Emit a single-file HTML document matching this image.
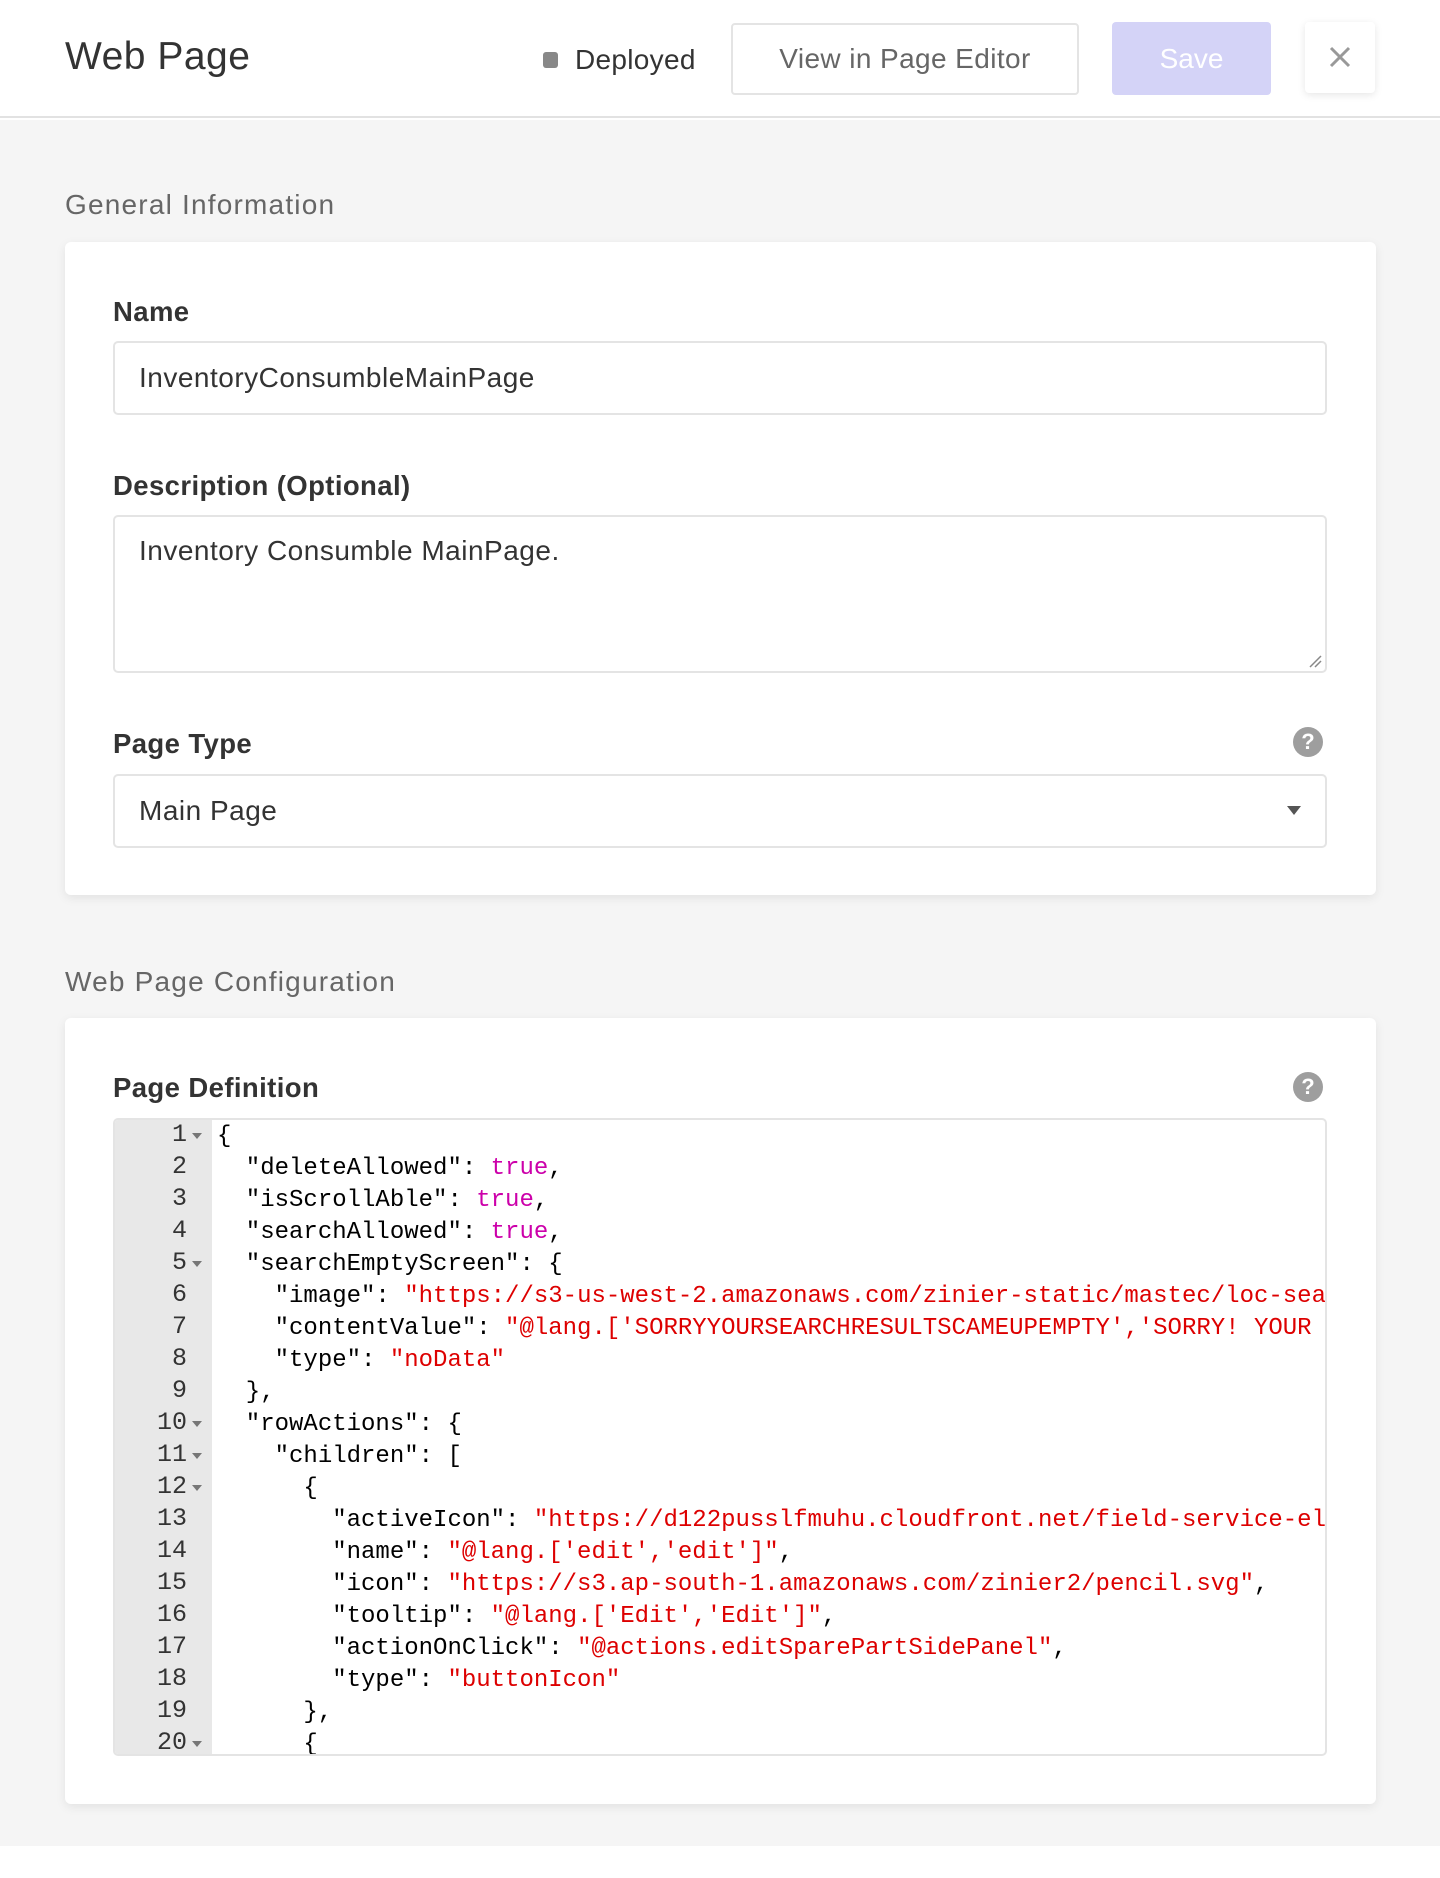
<!DOCTYPE html>
<html><head><meta charset="utf-8"><style>
*{box-sizing:border-box;margin:0;padding:0}
body{width:1440px;height:1878px;background:#fff;font-family:"Liberation Sans",sans-serif;color:#333;position:relative;overflow:hidden}
.abs{position:absolute}
.hdr{left:0;top:0;width:1440px;height:118px;background:#fff;border-bottom:2px solid #e2e2e2}
.grey{left:0;top:120px;width:1440px;height:1726px;background:#f5f5f5}
.card{background:#fff;border-radius:6px;box-shadow:0 3px 10px rgba(0,0,0,.08)}
.sec{font-size:28px;letter-spacing:1.2px;color:#666;left:65px}
.lbl{font-size:27.5px;letter-spacing:.4px;font-weight:bold;color:#333;left:113px}
.inp{left:113px;width:1214px;border:2px solid #e4e4e4;border-radius:5px;background:#fff;font-size:28px;letter-spacing:.5px;color:#333;padding-left:24px}
.help{width:30px;height:30px;border-radius:50%;background:#9e9e9e;color:#fff;font-weight:bold;font-size:22px;text-align:center;line-height:30px}
.ed{left:113px;top:1118px;width:1214px;height:638px;border:2px solid #e4e4e4;border-radius:5px;overflow:hidden;background:#fff}
.gut{left:0;top:0;width:97px;height:100%;background:#e8e8e8}
.ln{position:absolute;left:0;width:72px;text-align:right;font-family:"Liberation Mono",monospace;font-size:25px;color:#333}
.fa{position:absolute;left:77px;width:0;height:0;border-left:5px solid transparent;border-right:5px solid transparent;border-top:6px solid #777}
.code{position:absolute;left:102px;top:1px;font-family:"Liberation Mono",monospace;font-size:24px;line-height:32px;white-space:pre;color:#000}
.s{color:#d00}.b{color:#c0a}
</style></head><body>
<div class="abs hdr"></div>
<div class="abs" style="left:65px;top:35px;font-size:39px;letter-spacing:.5px;color:#333">Web Page</div>
<div class="abs" style="left:543px;top:52px;width:15px;height:16px;border-radius:3px;background:#888"></div>
<div class="abs" style="left:575px;top:44px;font-size:28px;letter-spacing:.3px;color:#333">Deployed</div>
<div class="abs" style="left:731px;top:23px;width:348px;height:72px;border:2px solid #e4e4e4;border-radius:4px;font-size:28px;letter-spacing:.4px;color:#666;text-align:center;line-height:68px">View in Page Editor</div>
<div class="abs" style="left:1112px;top:22px;width:159px;height:73px;background:#d4d3f7;border-radius:4px;font-size:28px;color:#fff;text-align:center;line-height:73px">Save</div>
<div class="abs" style="left:1305px;top:22px;width:70px;height:71px;background:#fff;border-radius:4px;box-shadow:0 2px 8px rgba(0,0,0,.1)">
<svg width="70" height="71"><path d="M26 26 L44 44 M44 26 L26 44" stroke="#999" stroke-width="3"/></svg></div>
<div class="abs grey"></div>
<div class="abs sec" style="top:189px">General Information</div>
<div class="abs card" style="left:65px;top:242px;width:1311px;height:653px"></div>
<div class="abs lbl" style="top:296px">Name</div>
<div class="abs inp" style="top:341px;height:74px;line-height:70px">InventoryConsumbleMainPage</div>
<div class="abs lbl" style="top:470px">Description (Optional)</div>
<div class="abs inp" style="top:515px;height:158px;padding-top:18px">Inventory Consumble MainPage.
<svg class="abs" style="right:3px;bottom:3px" width="14" height="14"><path d="M2 13 L13 2 M7 13 L13 7" stroke="#888" stroke-width="1.5"/></svg></div>
<div class="abs lbl" style="top:728px">Page Type</div>
<div class="abs help" style="left:1293px;top:727px">?</div>
<div class="abs inp" style="top:774px;height:74px;line-height:70px">Main Page</div>
<div class="abs" style="left:1287px;top:806px;border-left:7px solid transparent;border-right:7px solid transparent;border-top:9px solid #555"></div>
<div class="abs sec" style="top:966px">Web Page Configuration</div>
<div class="abs card" style="left:65px;top:1018px;width:1311px;height:786px"></div>
<div class="abs lbl" style="top:1072px">Page Definition</div>
<div class="abs help" style="left:1293px;top:1072px">?</div>
<div class="abs ed">
<div class="abs gut"></div>
<div style="position:absolute;left:0;top:0">
<div class="ln" style="top:0">1</div><div class="fa" style="top:13px"></div>
<div class="ln" style="top:32px">2</div>
<div class="ln" style="top:64px">3</div>
<div class="ln" style="top:96px">4</div>
<div class="ln" style="top:128px">5</div><div class="fa" style="top:141px"></div>
<div class="ln" style="top:160px">6</div>
<div class="ln" style="top:192px">7</div>
<div class="ln" style="top:224px">8</div>
<div class="ln" style="top:256px">9</div>
<div class="ln" style="top:288px">10</div><div class="fa" style="top:301px"></div>
<div class="ln" style="top:320px">11</div><div class="fa" style="top:333px"></div>
<div class="ln" style="top:352px">12</div><div class="fa" style="top:365px"></div>
<div class="ln" style="top:384px">13</div>
<div class="ln" style="top:416px">14</div>
<div class="ln" style="top:448px">15</div>
<div class="ln" style="top:480px">16</div>
<div class="ln" style="top:512px">17</div>
<div class="ln" style="top:544px">18</div>
<div class="ln" style="top:576px">19</div>
<div class="ln" style="top:608px">20</div><div class="fa" style="top:621px"></div>
</div>
<div class="code">{
  "deleteAllowed": <span class="b">true</span>,
  "isScrollAble": <span class="b">true</span>,
  "searchAllowed": <span class="b">true</span>,
  "searchEmptyScreen": {
    "image": <span class="s">"https://s3-us-west-2.amazonaws.com/zinier-static/mastec/loc-search.png"</span>,
    "contentValue": <span class="s">"@lang.['SORRYYOURSEARCHRESULTSCAMEUPEMPTY','SORRY! YOUR SEARCH']"</span>,
    "type": <span class="s">"noData"</span>
  },
  "rowActions": {
    "children": [
      {
        "activeIcon": <span class="s">"https://d122pusslfmuhu.cloudfront.net/field-service-el.svg"</span>,
        "name": <span class="s">"@lang.['edit','edit']"</span>,
        "icon": <span class="s">"https://s3.ap-south-1.amazonaws.com/zinier2/pencil.svg"</span>,
        "tooltip": <span class="s">"@lang.['Edit','Edit']"</span>,
        "actionOnClick": <span class="s">"@actions.editSparePartSidePanel"</span>,
        "type": <span class="s">"buttonIcon"</span>
      },
      {</div>
</div>
</body></html>
